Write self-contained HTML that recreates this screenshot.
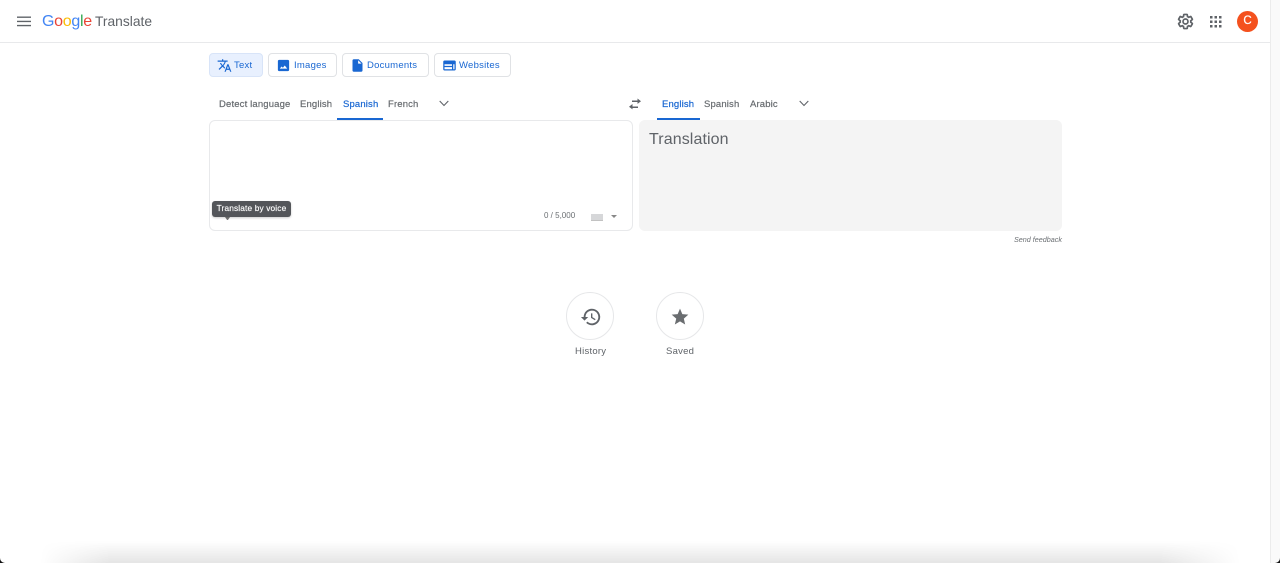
<!DOCTYPE html>
<html lang="en"><head><meta charset="utf-8"><title>Google Translate</title>
<style>
*{box-sizing:border-box}
html,body{margin:0;padding:0;width:1280px;height:563px;overflow:hidden;background:#fff;font-family:"Liberation Sans",sans-serif}
#w{position:relative;width:1280px;height:563px;overflow:hidden;background:#fff;filter:blur(.3px)}
.a{position:absolute;white-space:nowrap}
.btn{position:absolute;top:53px;height:24px;border:1px solid #e0e2e5;border-radius:4px;background:#fff;color:#1967d2;font-size:9.5px;line-height:23px;letter-spacing:.25px}
.btn span{position:absolute;top:0}
.btn svg{position:absolute;top:4px}
.tab{position:absolute;top:98px;font-size:9.5px;line-height:13px;color:#686c70;letter-spacing:.15px;white-space:nowrap;-webkit-text-stroke:.2px currentColor}
.blue{color:#1967d2}
.ul{position:absolute;top:118px;height:2px;background:#1967d2}
.circle{position:absolute;top:292px;width:48px;height:48px;border:1px solid #e6e7e9;border-radius:50%}
.lab{position:absolute;top:346px;font-size:9.5px;line-height:12px;color:#5f6368;letter-spacing:.25px}
</style></head><body><div id="w">
<div class="a" style="left:0;top:0;width:1270px;height:43px;border-bottom:1px solid #e8e9eb"></div>
<svg class="a" style="left:17px;top:16px" width="14" height="11" viewBox="0 0 14 11"><path d="M0 1.200h14M0 5.400h14M0 9.600h14" stroke="#5f6368" stroke-width="1.400"/></svg>
<div class="a" style="left:42px;top:12px;font-size:16px;line-height:20px;letter-spacing:-.3px"><span style="color:#4285f4">G</span><span style="color:#ea4335">o</span><span style="color:#fbbc05">o</span><span style="color:#4285f4">g</span><span style="color:#34a853">l</span><span style="color:#ea4335">e</span></div>
<div class="a" style="left:95px;top:11.500px;font-size:13.800px;line-height:20px;color:#5f6368">Translate</div>

<svg class="a" style="left:1176.500px;top:12.500px" width="17" height="17" viewBox="0 0 24 24" fill="none" stroke="#5f6368" stroke-width="2.400"><path d="M19.430 12.980c.04-.32.07-.64.07-.98s-.03-.66-.07-.98l2.110-1.650c.19-.15.24-.42.12-.64l-2-3.460c-.12-.22-.39-.3-.61-.22l-2.490 1c-.52-.4-1.080-.73-1.690-.98l-.38-2.650C14.460 2.180 14.250 2 14 2h-4c-.25 0-.46.18-.49.42l-.38 2.650c-.61.25-1.170.59-1.690.98l-2.490-1c-.23-.09-.49 0-.61.22l-2 3.460c-.13.22-.07.49.12.64l2.110 1.650c-.04.32-.07.65-.07.98s.03.66.07.98l-2.110 1.650c-.19.15-.24.42-.12.64l2 3.460c.12.22.39.3.61.22l2.490-1c.52.4 1.080.73 1.690.98l.38 2.650c.03.24.24.42.49.42h4c.25 0 .46-.18.49-.42l.38-2.650c.61-.25 1.170-.59 1.690-.98l2.490 1c.23.09.49 0 .61-.22l2-3.460c.12-.22.07-.49-.12-.64l-2.110-1.650z"/><circle cx="12" cy="12" r="3.500"/></svg>
<svg class="a" style="left:1210px;top:16px" width="12" height="12" viewBox="0 0 12 12" fill="#5f6368"><rect x="0" y="0" width="2.500" height="2.500"/><rect x="4.500" y="0" width="2.500" height="2.500"/><rect x="9" y="0" width="2.500" height="2.500"/><rect x="0" y="4.500" width="2.500" height="2.500"/><rect x="4.500" y="4.500" width="2.500" height="2.500"/><rect x="9" y="4.500" width="2.500" height="2.500"/><rect x="0" y="9" width="2.500" height="2.500"/><rect x="4.500" y="9" width="2.500" height="2.500"/><rect x="9" y="9" width="2.500" height="2.500"/></svg>
<div class="a" style="left:1237px;top:11px;width:21px;height:21px;border-radius:50%;background:#f4511e;color:#fff;font-size:11.500px;line-height:21px;text-align:center;-webkit-text-stroke:.2px #fff">C</div>

<div class="btn" style="left:209px;width:54px;background:#e8f0fe;border-color:#d8e4f8"><svg style="left:7px" width="15" height="15" viewBox="0 0 24 24" fill="#1967d2"><path d="M12.900 15.100l-2.600-2.500c1.800-2 3-4.200 3.700-6.600H17V4h-7V2H8v2H1v2h11.200c-.7 1.900-1.700 3.800-3.200 5.400C8 10.400 7.200 9.200 6.600 8h-2c.7 1.600 1.700 3.200 3 4.600l-5.100 5L4 19l5-5 3.100 3.100zM18.500 10h-2L12 22h2l1.100-3h4.800l1.100 3h2zm-2.600 7l1.600-4.300 1.600 4.300z"/></svg><span style="left:24px">Text</span></div>
<div class="btn" style="left:268px;width:69px"><svg style="left:7px" width="15" height="15" viewBox="0 0 24 24" fill="#1967d2"><path d="M21 19V5c0-1.100-.9-2-2-2H5c-1.100 0-2 .9-2 2v14c0 1.100.9 2 2 2h14c1.100 0 2-.9 2-2zM6 17l3-3.500 2 2 3-3.500 4 5z"/></svg><span style="left:25px">Images</span></div>
<div class="btn" style="left:342px;width:87px"><svg style="left:7px" width="15" height="15" viewBox="0 0 24 24" fill="#1967d2"><path d="M14 2H6c-1.100 0-2 .9-2 2v16c0 1.100.9 2 2 2h12c1.100 0 2-.9 2-2V8zm-1 7V3.500L18.500 9z"/></svg><span style="left:24px">Documents</span></div>
<div class="btn" style="left:434px;width:77px"><svg style="left:7px" width="15" height="15" viewBox="0 0 24 24" fill="#1967d2"><path fill-rule="evenodd" d="M20 4H4c-1.100 0-2 .9-2 2v12c0 1.100.9 2 2 2h16c1.100 0 2-.9 2-2V6c0-1.100-.9-2-2-2zM4 10h12v2.500H4zm0 4.500h12V18H4zM18 18v-8h2v8z"/></svg><span style="left:24px">Websites</span></div>

<div class="tab" style="left:219px">Detect language</div>
<div class="tab" style="left:300px">English</div>
<div class="tab blue" style="left:343px">Spanish</div>
<div class="tab" style="left:388px">French</div>
<div class="ul" style="left:337px;width:46px"></div>
<svg class="a" style="left:439px;top:100px" width="10" height="7" viewBox="0 0 10 7"><path d="M.7 1l4.300 4.500L9.300 1" fill="none" stroke="#5f6368" stroke-width="1.100"/></svg>

<svg class="a" style="left:628px;top:98px" width="14" height="12" viewBox="0 0 14 12" fill="#5f6368"><path d="M9.500 0.500l3.500 2.700-3.500 2.700V4H4V2.500h5.500zM4.500 6l-3.500 2.700 3.500 2.700V10H10V8.500H4.500z"/></svg>

<div class="tab blue" style="left:662px">English</div>
<div class="tab" style="left:704px">Spanish</div>
<div class="tab" style="left:750px">Arabic</div>
<div class="ul" style="left:657px;width:43px"></div>
<svg class="a" style="left:799px;top:100px" width="10" height="7" viewBox="0 0 10 7"><path d="M.7 1l4.300 4.500L9.300 1" fill="none" stroke="#5f6368" stroke-width="1.100"/></svg>

<div class="a" style="left:209px;top:120px;width:424px;height:111px;border:1px solid #e8e9eb;border-radius:6px"></div>
<div class="a" style="left:639px;top:120px;width:423px;height:111px;background:#f4f4f4;border-radius:6px"></div>
<div class="a" style="left:649px;top:130px;font-size:16px;line-height:20px;color:#5f6368;letter-spacing:.1px">Translation</div>

<div class="a" style="left:223px;top:214px;width:9px;height:6px;background:#777;clip-path:polygon(0 0,100% 0,55% 100%,45% 100%)"></div>
<div class="a" style="left:212px;top:201px;width:79px;height:16px;background:#54565a;border-radius:3px;color:#fff;font-size:8.300px;line-height:15.500px;text-align:center;letter-spacing:.15px;box-shadow:0 1px 2px rgba(0,0,0,.2);-webkit-text-stroke:.15px #fff">Translate by voice</div>

<div class="a" style="left:544px;top:210px;font-size:8px;line-height:11px;color:#6b6f73">0 / 5,000</div>
<div class="a" style="left:591px;top:214px;width:12px;height:7px;background:#d6d7d9;border-bottom:1px solid #c2c2c2"></div>
<div class="a" style="left:611px;top:214.500px;width:0;height:0;border-left:3px solid transparent;border-right:3px solid transparent;border-top:3px solid #888"></div>

<div class="a" style="left:1014px;top:235px;font-size:7.200px;line-height:10px;font-style:italic;color:#6b6f73">Send feedback</div>

<div class="circle" style="left:566px"></div>
<svg class="a" style="left:580px;top:305.500px" width="22" height="22" viewBox="0 0 24 24" fill="#5f6368"><path d="M13 3a9 9 0 0 0-9 9H1l3.900 3.900L9 12H6a7 7 0 1 1 2.100 5l-1.400 1.400A9 9 0 1 0 13 3zm-1 5v5l4.300 2.500.7-1.200-3.500-2.100V8z"/></svg>
<div class="lab" style="left:575px;top:346px">History</div>
<div class="circle" style="left:656px"></div>
<svg class="a" style="left:670px;top:306.500px" width="20" height="20" viewBox="0 0 24 24" fill="#6a6d70"><path d="M12 17.300l6.200 3.700-1.600-7L22 9.200l-7.200-.6L12 2 9.200 8.600 2 9.200 7.500 14l-1.700 7z"/></svg>
<div class="lab" style="left:666px;top:346px">Saved</div>

<div class="a" style="left:40px;top:541px;width:1200px;height:22px;background:linear-gradient(to bottom,rgba(0,0,0,0),rgba(0,0,0,.1));-webkit-mask-image:linear-gradient(to right,transparent,#000 70px,#000 1120px,transparent);mask-image:linear-gradient(to right,transparent,#000 70px,#000 1120px,transparent)"></div>
<div class="a" style="left:1270px;top:0;width:10px;height:563px;background:#fafafa;border-left:1px solid #ececec"></div>
<svg class="a" style="left:0;top:558px" width="5" height="5"><path d="M0 0v5h5A5 5 0 0 1 0 0z" fill="#111"/></svg>
<svg class="a" style="left:1275px;top:558px" width="5" height="5"><path d="M5 0v5H0A5 5 0 0 0 5 0z" fill="#111"/></svg>
</div></body></html>
